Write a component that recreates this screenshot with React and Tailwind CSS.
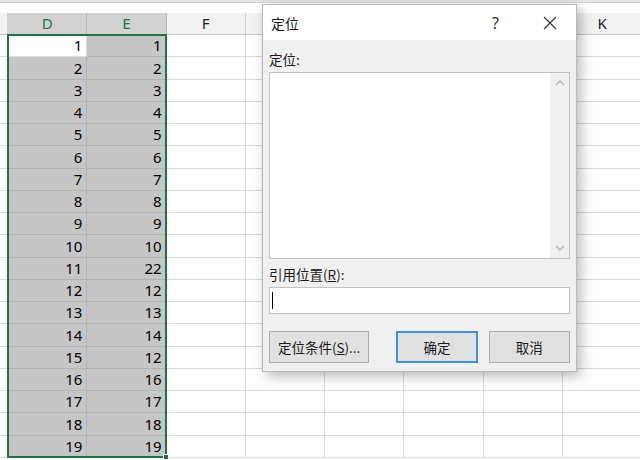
import React from "react";

const cols = ["C", "D", "E", "F", "G", "H", "I", "J", "K"];
const eVals = [1, 2, 3, 4, 5, 6, 7, 8, 9, 10, 22, 12, 13, 14, 12, 16, 17, 18, 19];

const colW = (c) => (c === "C" ? "w-[8px]" : "w-[79.3px]");

const Cell = ({ c, r }) => {
  const sel = (c === "D" && r > 1) || c === "E";
  let text = "";
  if (c === "D") text = r;
  if (c === "E") text = eVals[r - 1];
  return (
    <div
      className={`${colW(c)} shrink-0 h-full border-r border-b flex items-center justify-end pr-[4px] text-[15px] text-black ${
        sel ? "bg-[#c6c6c6] border-[#b3b3b3]" : "bg-white border-[#dadada]"
      }`}
    >
      {text}
    </div>
  );
};

const Dialog = () => (
  <div className="absolute left-[262px] top-[4px] w-[315px] h-[368px] border border-[#b9b9b9] bg-[#f0f0f0] shadow-[4px_4px_12px_rgba(0,0,0,0.28)] flex flex-col text-[13.5px] text-[#1a1a1a] font-['Noto_Sans_CJK_SC','Noto_Sans',sans-serif]">
    {/* title bar */}
    <div className="h-[35px] bg-white flex items-center pl-[8px] shrink-0">
      <span className="text-[14px] leading-[18px]">定位</span>
      <span className="ml-auto mr-[44px] text-[16px] leading-[18px] text-[#333] font-['Noto_Sans',sans-serif]">?</span>
      <svg width="14" height="14" viewBox="0 0 14 14" className="mr-[19px]">
        <path d="M1 1L13 13M13 1L1 13" stroke="#333" strokeWidth="1.1" fill="none" />
      </svg>
    </div>

    <div className="flex flex-col px-[6px] pt-[9px]">
      <div className="h-[20px] leading-[20px]">定位:</div>
      <div className="mt-[3px] h-[187px] border border-[#c3c3c3] bg-white flex">
        <div className="flex-1" />
        <div className="w-[19px] bg-[#f0f0f0] flex flex-col items-center justify-between py-[7px]">
          <svg width="10" height="6" viewBox="0 0 10 6">
            <path d="M1 5L5 1L9 5" stroke="#b5b5b5" strokeWidth="1.3" fill="none" />
          </svg>
          <svg width="10" height="6" viewBox="0 0 10 6">
            <path d="M1 1L5 5L9 1" stroke="#b5b5b5" strokeWidth="1.3" fill="none" />
          </svg>
        </div>
      </div>

      <div className="mt-[5px] h-[20px] leading-[20px]">
        引用位置(<span className="underline">R</span>):
      </div>
      <div className="mt-[3px] h-[27px] border border-[#c3c3c3] bg-white flex items-center pl-[2px]">
        <div className="w-[1px] h-[17px] bg-black" />
      </div>

      <div className="mt-[17px] flex">
        <button className="w-[101px] h-[32px] bg-[#e1e1e1] border border-[#adadad] text-[13.5px]">
          定位条件(<span className="underline">S</span>)...
        </button>
        <button className="ml-[27px] w-[82px] h-[32px] bg-[#e1e1e1] border-2 border-[#3c8fd8] text-[13.5px]">
          确定
        </button>
        <button className="ml-[11px] w-[82px] h-[32px] bg-[#e1e1e1] border border-[#adadad] text-[13.5px]">
          取消
        </button>
      </div>
    </div>
  </div>
);

export default function App() {
  const rows = Array.from({ length: 19 }, (_, i) => i + 1);
  return (
    <div className="relative w-[640px] h-[460px] overflow-hidden bg-white font-['Noto_Sans',sans-serif]">
      <div className="h-[3px] bg-[#e3e3e3] border-b border-[#d4d4d4]" />
      <div className="h-[10px]" />
      {/* column headers */}
      <div className="flex h-[22px] border-b border-[#c6c6c6]">
        {cols.map((c) => (
          <div
            key={c}
            className={`${colW(c)} shrink-0 h-full border-r flex items-center justify-center text-[15px] ${
              c === "D" || c === "E"
                ? "bg-[#d2d2d2] text-[#217346] border-[#b5b5b5]"
                : "bg-[#f2f2f2] text-[#222] border-[#d2d2d2]"
            }`}
          >
            {c === "C" ? "" : c}
          </div>
        ))}
      </div>
      {/* rows */}
      {rows.map((r) => (
        <div key={r} className="flex h-[22.25px]">
          {cols.map((c) => (
            <Cell key={c} c={c} r={r} />
          ))}
        </div>
      ))}

      {/* selection outline */}
      <div className="absolute left-[7px] top-[34px] w-[160px] h-[424px] border-2 border-[#217346] pointer-events-none" />
      <div className="absolute left-[163px] top-[454px] w-[6px] h-[6px] bg-[#217346] border border-white" />

      <Dialog />
    </div>
  );
}
